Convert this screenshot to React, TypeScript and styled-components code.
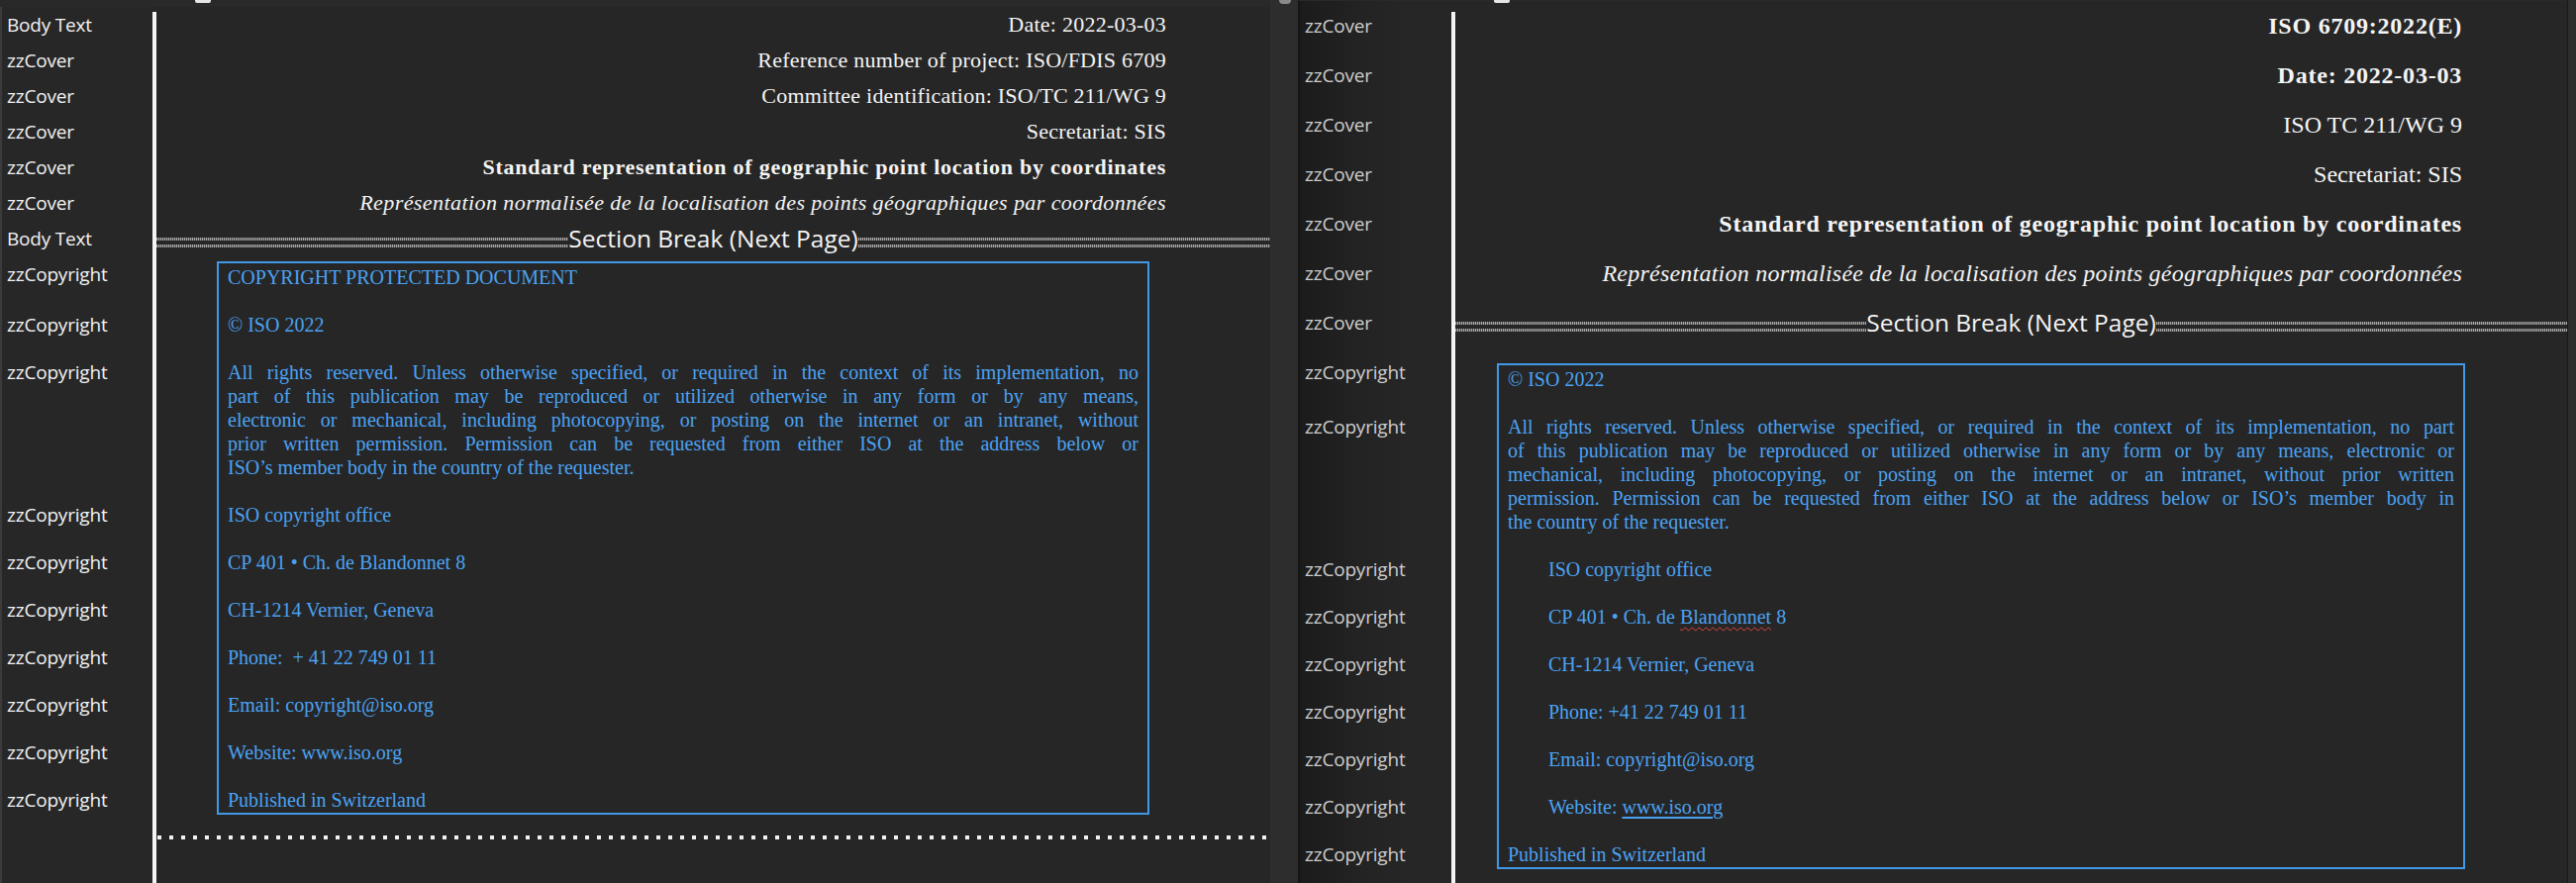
import React from 'react'
import styled, { createGlobalStyle } from 'styled-components'

const BLUE = '#4ba2f2'
const SERIF = `"Liberation Serif", "Times New Roman", serif`
const SANS = `"Open Sans", "DejaVu Sans", sans-serif`

type LabelRow = { text?: string; h: number; lh: number }
type CoverRow = { text: string; bold?: boolean; italic?: boolean }
type Para = { lines: string[]; indent?: boolean; kind?: 'plain' | 'street' | 'web' | 'phone' }

interface PaneConfig {
  width: number;
  stripH: number;
  ruleTop: number;
  rowH: number;
  coverSize: number;
  padRight: number;
  track: { regular: number; bold: number; italic: number };
  boxMargin: string;
  labelColor: string;
  shaded: boolean;
  labels: LabelRow[];
  cover: CoverRow[];
  paras: Para[];
  pageBreak: boolean;
}

const cover = (text: string, h: number): LabelRow => ({ text, h, lh: h })
const copy = (lines: number): LabelRow => ({ text: 'zzCopyright', h: lines * 24 + 24, lh: 24 })

const leftPane: PaneConfig = {
  width: 1283,
  stripH: 7,
  ruleTop: 5,
  rowH: 36,
  coverSize: 22,
  padRight: 105,
  track: { regular: 0.24, bold: 0.75, italic: 0.43 },
  boxMargin: '5px 122px 0 61px',
  labelColor: '#f2f2f2',
  shaded: false,
  labels: [
    cover('Body Text', 36),
    ...Array(5).fill(0).map(() => cover('zzCover', 36)),
    cover('Body Text', 36),
    cover('zzCopyright', 36),
    { h: 21, lh: 24 },
    copy(1),
    copy(5),
    ...Array(7).fill(0).map(() => copy(1)),
  ],
  cover: [
    { text: 'Date: 2022-03-03' },
    { text: 'Reference number of project: ISO/FDIS 6709' },
    { text: 'Committee identification: ISO/TC 211/WG 9' },
    { text: 'Secretariat: SIS' },
    { text: 'Standard representation of geographic point location by coordinates', bold: true },
    { text: 'Représentation normalisée de la localisation des points géographiques par coordonnées', italic: true },
  ],
  paras: [
    { lines: ['COPYRIGHT PROTECTED DOCUMENT'] },
    { lines: ['© ISO 2022'] },
    {
      lines: [
        'All rights reserved. Unless otherwise specified, or required in the context of its implementation, no',
        'part of this publication may be reproduced or utilized otherwise in any form or by any means,',
        'electronic or mechanical, including photocopying, or posting on the internet or an intranet, without',
        'prior written permission. Permission can be requested from either ISO at the address below or',
        'ISO’s member body in the country of the requester.',
      ],
    },
    { lines: ['ISO copyright office'] },
    { lines: ['CP 401 • Ch. de Blandonnet 8'] },
    { lines: ['CH-1214 Vernier, Geneva'] },
    { lines: ['Phone:  + 41 22 749 01 11'], kind: 'phone' },
    { lines: ['Email: copyright@iso.org'] },
    { lines: ['Website: www.iso.org'] },
    { lines: ['Published in Switzerland'] },
  ],
  pageBreak: true,
}

const rightPane: PaneConfig = {
  width: 1281,
  stripH: 1,
  ruleTop: 11,
  rowH: 50,
  coverSize: 24,
  padRight: 106,
  track: { regular: 0, bold: 0.78, italic: 0.23 },
  boxMargin: '16px 103px 0 42px',
  labelColor: '#cdcdcd',
  shaded: true,
  labels: [
    ...Array(7).fill(0).map(() => cover('zzCover', 50)),
    cover('zzCopyright', 50),
    { h: 18, lh: 24 },
    copy(5),
    ...Array(7).fill(0).map(() => copy(1)),
  ],
  cover: [
    { text: 'ISO 6709:2022(E)', bold: true },
    { text: 'Date: 2022-03-03', bold: true },
    { text: 'ISO TC 211/WG 9' },
    { text: 'Secretariat: SIS' },
    { text: 'Standard representation of geographic point location by coordinates', bold: true },
    { text: 'Représentation normalisée de la localisation des points géographiques par coordonnées', italic: true },
  ],
  paras: [
    { lines: ['© ISO 2022'] },
    {
      lines: [
        'All rights reserved. Unless otherwise specified, or required in the context of its implementation, no part',
        'of this publication may be reproduced or utilized otherwise in any form or by any means, electronic or',
        'mechanical, including photocopying, or posting on the internet or an intranet, without prior written',
        'permission. Permission can be requested from either ISO at the address below or ISO’s member body in',
        'the country of the requester.',
      ],
    },
    { lines: ['ISO copyright office'], indent: true },
    { lines: ['CP 401 • Ch. de Blandonnet 8'], indent: true, kind: 'street' },
    { lines: ['CH-1214 Vernier, Geneva'], indent: true },
    { lines: ['Phone: +41 22 749 01 11'], indent: true },
    { lines: ['Email: copyright@iso.org'], indent: true },
    { lines: ['Website: www.iso.org'], indent: true, kind: 'web' },
    { lines: ['Published in Switzerland'] },
  ],
  pageBreak: false,
}

const renderLine = (line: string, kind?: Para['kind']) => {
  if (kind === 'street') {
    return <>CP 401 • Ch. de <Misspelled>Blandonnet</Misspelled> 8</>
  }
  if (kind === 'web') {
    return <>Website: <Link>www.iso.org</Link></>
  }
  return line
}

const trackFor = (cfg: PaneConfig, c: CoverRow) =>
  c.bold ? cfg.track.bold : c.italic ? cfg.track.italic : cfg.track.regular

const PaneView = ({ cfg }: { cfg: PaneConfig }) => (
  <Pane $w={cfg.width}>
    <RulerStrip $h={cfg.stripH}>
      <Marker />
    </RulerStrip>
    <Body>
      <StyleArea $shaded={cfg.shaded}>
        {cfg.labels.map((l, i) => (
          <StyleLabel key={i} $h={l.h} $lh={l.lh} $color={cfg.labelColor}>
            {l.text}
          </StyleLabel>
        ))}
      </StyleArea>
      <Rule $top={cfg.ruleTop} />
      <Doc>
        {cfg.cover.map((c, i) => (
          <CoverLine
            key={i}
            $h={cfg.rowH}
            $size={cfg.coverSize}
            $pad={cfg.padRight}
            $track={trackFor(cfg, c)}
            $bold={c.bold}
            $italic={c.italic}
          >
            {c.text}
          </CoverLine>
        ))}
        <SectionBreak $h={cfg.rowH}>
          <BreakLine />
          <BreakLabel>Section Break (Next Page)</BreakLabel>
          <BreakLine />
        </SectionBreak>
        <CopyrightBox $margin={cfg.boxMargin}>
          {cfg.paras.map((p, i) => (
            <Paragraph key={i} $indent={p.indent} $pre={p.kind === 'phone'}>
              {p.lines.map((line, j) => (
                <TextLine key={j} $justify={j < p.lines.length - 1}>
                  {renderLine(line, p.kind)}
                </TextLine>
              ))}
            </Paragraph>
          ))}
        </CopyrightBox>
        {cfg.pageBreak && <PageBreak />}
      </Doc>
    </Body>
  </Pane>
)

export default function App() {
  return (
    <>
      <GlobalStyle />
      <Window>
        <PaneView cfg={leftPane} />
        <ScrollStrip $w={29}>
          <Thumb />
        </ScrollStrip>
        <PaneView cfg={rightPane} />
        <ScrollStrip $w={9} $edge />
      </Window>
    </>
  )
}

const GlobalStyle = createGlobalStyle`
  html, body {
    margin: 0;
    padding: 0;
    background: #262626;
  }
  body {
    width: 2602px;
    height: 892px;
    overflow: hidden;
  }
`;

const Window = styled.div`
  display: flex;
  width: 2602px;
  height: 892px;
  background: #262626;
  overflow: hidden;
`;

const Pane = styled.section<{ $w: number }>`
  width: ${({ $w }) => $w}px;
  flex: none;
  display: flex;
  flex-direction: column;
  height: 100%;
`;

const RulerStrip = styled.div<{ $h: number }>`
  height: ${({ $h }) => $h}px;
  flex: none;
  background: #292929;
`;

const Marker = styled.div`
  width: 16px;
  height: 3px;
  margin-left: 197px;
  background: #e6e6e6;
  border-radius: 0 0 2px 2px;
`;

const Body = styled.div`
  flex: 1;
  min-height: 0;
  display: grid;
  grid-template-columns: 154px 4px 1fr;
`;

const StyleArea = styled.div<{ $shaded: boolean }>`
  display: flex;
  flex-direction: column;
  box-sizing: border-box;
  overflow: hidden;
  border-left: ${({ $shaded }) => ($shaded ? '1px solid #141414' : '2px solid #3b3b3b')};
  background: ${({ $shaded }) =>
    $shaded ? 'linear-gradient(90deg, #1b1b1b 0, #232323 60px, #262626 110px)' : '#272727'};
`;

const StyleLabel = styled.div<{ $h: number; $lh: number; $color: string }>`
  flex: none;
  height: ${({ $h }) => $h}px;
  line-height: ${({ $lh }) => $lh}px;
  padding-left: 5px;
  font-family: ${SANS};
  font-size: 19px;
  letter-spacing: -0.2px;
  color: ${({ $color }) => $color};
  white-space: nowrap;
`;

const Rule = styled.div<{ $top: number }>`
  margin-top: ${({ $top }) => $top}px;
  background: #f4f4f4;
`;

const Doc = styled.div`
  display: flex;
  flex-direction: column;
  min-width: 0;
`;

const CoverLine = styled.div<{
  $h: number;
  $size: number;
  $pad: number;
  $track: number;
  $bold?: boolean;
  $italic?: boolean;
}>`
  flex: none;
  height: ${({ $h }) => $h}px;
  line-height: ${({ $h }) => $h}px;
  padding-right: ${({ $pad }) => $pad}px;
  text-align: right;
  white-space: nowrap;
  font-family: ${SERIF};
  font-size: ${({ $size }) => $size}px;
  letter-spacing: ${({ $track }) => $track}px;
  font-weight: ${({ $bold }) => ($bold ? 700 : 400)};
  font-style: ${({ $italic }) => ($italic ? 'italic' : 'normal')};
  color: #f4f4f4;
`;

const SectionBreak = styled.div<{ $h: number }>`
  flex: none;
  height: ${({ $h }) => $h}px;
  display: flex;
  align-items: center;
`;

const BreakLine = styled.div`
  flex: 1;
  height: 10px;
  margin-top: 8px;
  background:
    linear-gradient(#262626, #262626) 0 3px / 100% 4px no-repeat,
    repeating-linear-gradient(90deg, #a8a8a8 0 1px, #4e4e4e 1px 2px);
`;

const BreakLabel = styled.span`
  font-family: ${SANS};
  font-size: 24.5px;
  line-height: 36px;
  color: #f4f4f4;
  white-space: nowrap;
`;

const CopyrightBox = styled.div<{ $margin: string }>`
  flex: none;
  margin: ${({ $margin }) => $margin};
  padding: 2px 9px 1px;
  border: 2px solid #4199e6;
  font-family: ${SERIF};
  font-size: 20px;
  line-height: 24px;
  color: ${BLUE};
`;

const Paragraph = styled.div<{ $indent?: boolean; $pre?: boolean }>`
  margin-bottom: 24px;
  padding-left: ${({ $indent }) => ($indent ? 41 : 0)}px;
  white-space: ${({ $pre }) => ($pre ? 'pre' : 'normal')};

  &:last-child {
    margin-bottom: 0;
  }
`;

const TextLine = styled.div<{ $justify: boolean }>`
  text-align: ${({ $justify }) => ($justify ? 'justify' : 'left')};
  text-align-last: ${({ $justify }) => ($justify ? 'justify' : 'left')};
`;

const Misspelled = styled.span`
  text-decoration: underline wavy #e0443c;
  text-decoration-thickness: 1px;
  text-underline-offset: 3px;
`;

const Link = styled.span`
  text-decoration: underline;
  text-underline-offset: 3px;
`;

const PageBreak = styled.div`
  flex: none;
  height: 4px;
  margin: 21px 2px 0 1px;
  background: repeating-linear-gradient(90deg, #f2f2f2 0 4px, transparent 4px 12px);
`;

const ScrollStrip = styled.div<{ $w: number; $edge?: boolean }>`
  width: ${({ $w }) => $w}px;
  flex: none;
  box-sizing: border-box;
  background: #2d2d2d;
  border-left: ${({ $edge }) => ($edge ? '1px solid #1a1a1a' : 'none')};
  border-right: ${({ $edge }) => ($edge ? 'none' : '1px solid #171717')};
`;

const Thumb = styled.div`
  width: 12px;
  height: 4px;
  margin-left: 9px;
  background: #8a8a8a;
  border-radius: 0 0 6px 6px;
`;
